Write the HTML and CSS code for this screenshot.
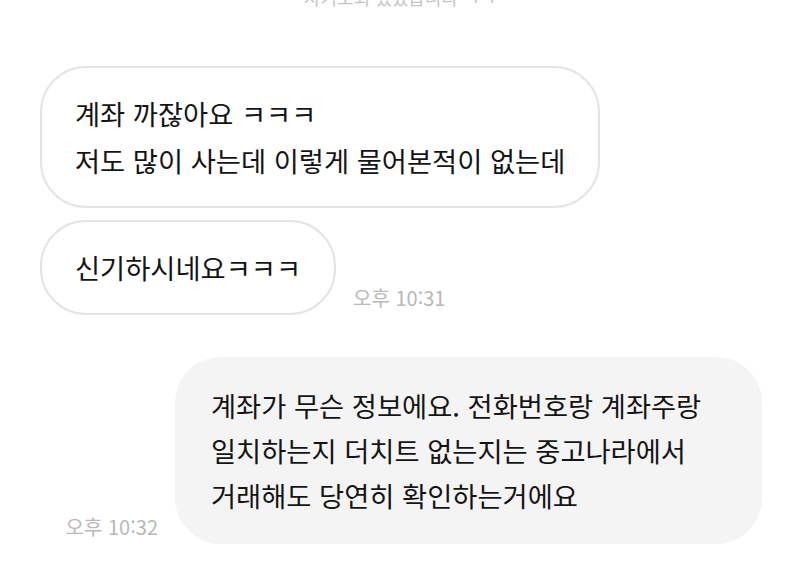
FILE: index.html
```html
<!DOCTYPE html>
<html lang="ko">
<head>
<meta charset="utf-8">
<title>채팅</title>
<link rel="stylesheet" href="styles.css">
</head>
<body>
<div class="chat">
  <div class="sys">사기조회 했었습니다 ㅋㅋ</div>

  <div class="row in first">
    <div class="bubble in">계좌 까잖아요 ㅋㅋㅋ<br>저도 많이 사는데 이렇게 물어본적이 없는데</div>
  </div>

  <div class="row in second">
    <div class="bubble in">신기하시네요ㅋㅋㅋ</div>
    <div class="time">오후 10:31</div>
  </div>

  <div class="row out">
    <div class="time">오후 10:32</div>
    <div class="bubble out">계좌가 무슨 정보에요. 전화번호랑 계좌주랑<br>일치하는지 더치트 없는지는 중고나라에서<br>거래해도 당연히 확인하는거에요</div>
  </div>
</div>
</body>
</html>
```

FILE: styles.css
```css
html, body {
  margin: 0;
  padding: 0;
  background: #ffffff;
}

body {
  font-family: "Noto Sans CJK KR", "Noto Sans", sans-serif;
  color: #141414;
  width: 800px;
  height: 566px;
  overflow: hidden;
}

.chat {
  display: flex;
  flex-direction: column;
}

.sys {
  margin-top: -14px;
  text-align: center;
  font-size: 18px;
  line-height: 22px;
  color: #c4c4c4;
}

.row {
  display: flex;
  align-items: flex-end;
  gap: 17px;
}

.row.in {
  padding-left: 40px;
}

.row.first {
  margin-top: 58px;
}

.row.second {
  margin-top: 12px;
}

.row.out {
  margin-top: 42px;
  justify-content: flex-end;
  padding-right: 38px;
}

.bubble {
  box-sizing: border-box;
  font-size: 27.3px;
  line-height: 47px;
  border-radius: 46px;
  white-space: nowrap;
}

.bubble.in {
  background: #ffffff;
  border: 2px solid #e4e4e4;
  padding: 22px 33px 22px 33px;
}

.bubble.out {
  width: 587px;
  background: #f4f4f4;
  border: 2px solid #f4f4f4;
  padding: 24px 30px 24px 34px;
  line-height: 45px;
}

.time {
  font-size: 20px;
  line-height: 24px;
  color: #b8b8b8;
  margin-bottom: 5px;
  white-space: nowrap;
}
```
